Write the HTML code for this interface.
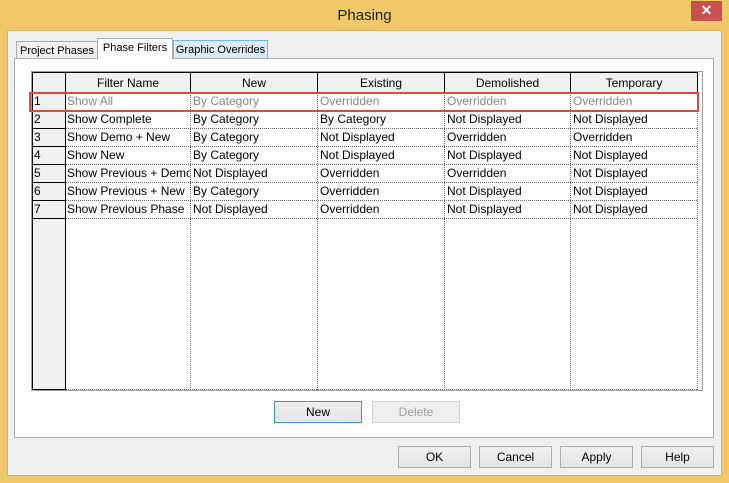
<!DOCTYPE html>
<html><head><style>
*{margin:0;padding:0;box-sizing:border-box}
body{width:729px;height:483px;background:#F0C86A;position:relative;font-family:"Liberation Sans",sans-serif;font-size:12px;color:#000;overflow:hidden}
.a{position:absolute}
.title{left:0;width:729px;text-align:center;top:7px;font-size:15px;color:#222}
.close{left:691px;top:1px;width:31px;height:20px;background:#C75050;color:#fff;text-align:center;font-size:14px;line-height:19px;font-weight:bold}
.client{left:7px;top:30px;width:715px;height:446px;background:#F0F0F0;border:1px solid #d8b35c}
.tab{height:20px;top:40px;border:1px solid #ACACAC;border-bottom:none;background:#F0F0F0;text-align:center;line-height:18px;white-space:nowrap;font-size:11px;overflow:hidden}
.panel{left:14px;top:58px;width:700px;height:380px;background:#fff;border:1px solid #ACACAC}
.grid{left:31px;top:71px;width:672px;height:320px;border:1px solid #A0A0A0}
.hdr{top:72px;height:21px;background:#F0F0F0;border-right:1px solid #000;border-bottom:1px solid #000;text-align:center;line-height:20px}
.rh{left:32px;width:34px;background:#F0F0F0;border-right:1px solid #000;border-left:1px solid #000}
.vl{top:93px;height:297px;border-left:1px dotted #666;width:0}
.hl{left:66px;width:631px;height:0;border-top:1px dotted #666}
.rs{left:32px;width:34px;height:0;border-top:1px solid #000}
.c{height:18px;line-height:19px;padding-left:2px;white-space:nowrap;overflow:hidden}
.g{color:#888}
.btn{height:22px;border:1px solid #ADADAD;background:linear-gradient(#F0F0F0,#E5E5E5);text-align:center;line-height:20px}
</style></head><body>
<div class="a title">Phasing</div>
<div class="a close">✕</div>
<div class="a client"></div>
<div class="a tab" style="left:16px;width:82px;top:41px">Project Phases</div>
<div class="a tab" style="left:97px;width:76px;top:38px;height:21px;background:#fff;z-index:2">Phase Filters</div>
<div class="a tab" style="left:173px;width:95px;background:#DDEBF7;border-color:#7EB4EA">Graphic Overrides</div>
<div class="a panel"></div>
<div class="a grid"></div>
<div class="a rh" style="top:72px;height:318px;border-left:1px solid #000;border-top:1px solid #000;border-bottom:1px solid #000"></div>
<div class="a hdr" style="left:66px;width:125px;border-top:1px solid #000">Filter Name</div>
<div class="a hdr" style="left:191px;width:127px;border-top:1px solid #000">New</div>
<div class="a hdr" style="left:318px;width:127px;border-top:1px solid #000">Existing</div>
<div class="a hdr" style="left:445px;width:126px;border-top:1px solid #000">Demolished</div>
<div class="a hdr" style="left:571px;width:127px;border-top:1px solid #000">Temporary</div>
<div class="a vl" style="left:190px"></div>
<div class="a vl" style="left:317px"></div>
<div class="a vl" style="left:444px"></div>
<div class="a vl" style="left:570px"></div>
<div class="a vl" style="left:697px"></div>
<div class="a hl" style="top:110px"></div><div class="a rs" style="top:110px"></div>
<div class="a hl" style="top:128px"></div><div class="a rs" style="top:128px"></div>
<div class="a hl" style="top:146px"></div><div class="a rs" style="top:146px"></div>
<div class="a hl" style="top:164px"></div><div class="a rs" style="top:164px"></div>
<div class="a hl" style="top:182px"></div><div class="a rs" style="top:182px"></div>
<div class="a hl" style="top:200px"></div><div class="a rs" style="top:200px"></div>
<div class="a hl" style="top:218px"></div><div class="a rs" style="top:218px"></div>
<div class="a hl" style="top:389px"></div>
<div class="a" style="left:32px;top:92px">
<div class="c">1</div><div class="c">2</div><div class="c">3</div><div class="c">4</div><div class="c">5</div><div class="c">6</div><div class="c">7</div></div>
<div class="a" style="left:65px;top:92px;width:125px">
<div class="c g">Show All</div><div class="c">Show Complete</div><div class="c">Show Demo + New</div><div class="c">Show New</div><div class="c">Show Previous + Demo</div><div class="c">Show Previous + New</div><div class="c">Show Previous Phase</div></div>
<div class="a" style="left:191px;top:92px;width:126px">
<div class="c g">By Category</div><div class="c">By Category</div><div class="c">By Category</div><div class="c">By Category</div><div class="c">Not Displayed</div><div class="c">By Category</div><div class="c">Not Displayed</div></div>
<div class="a" style="left:318px;top:92px;width:126px">
<div class="c g">Overridden</div><div class="c">By Category</div><div class="c">Not Displayed</div><div class="c">Not Displayed</div><div class="c">Overridden</div><div class="c">Overridden</div><div class="c">Overridden</div></div>
<div class="a" style="left:445px;top:92px;width:125px">
<div class="c g">Overridden</div><div class="c">Not Displayed</div><div class="c">Overridden</div><div class="c">Not Displayed</div><div class="c">Overridden</div><div class="c">Not Displayed</div><div class="c">Not Displayed</div></div>
<div class="a" style="left:571px;top:92px;width:126px">
<div class="c g">Overridden</div><div class="c">Not Displayed</div><div class="c">Overridden</div><div class="c">Not Displayed</div><div class="c">Not Displayed</div><div class="c">Not Displayed</div><div class="c">Not Displayed</div></div>
<div class="a" style="left:29px;top:92px;width:670px;height:20px;border:2px solid #E04848"></div>
<div class="a btn" style="left:274px;top:401px;width:88px;border-color:#3C8FE0">New</div>
<div class="a btn" style="left:372px;top:401px;width:88px;color:#A0A0A0;background:#EFEFEF;border-color:#D5D5D5">Delete</div>
<div class="a btn" style="left:398px;top:446px;width:73px">OK</div>
<div class="a btn" style="left:479px;top:446px;width:73px">Cancel</div>
<div class="a btn" style="left:560px;top:446px;width:73px">Apply</div>
<div class="a btn" style="left:641px;top:446px;width:73px">Help</div>
</body></html>
